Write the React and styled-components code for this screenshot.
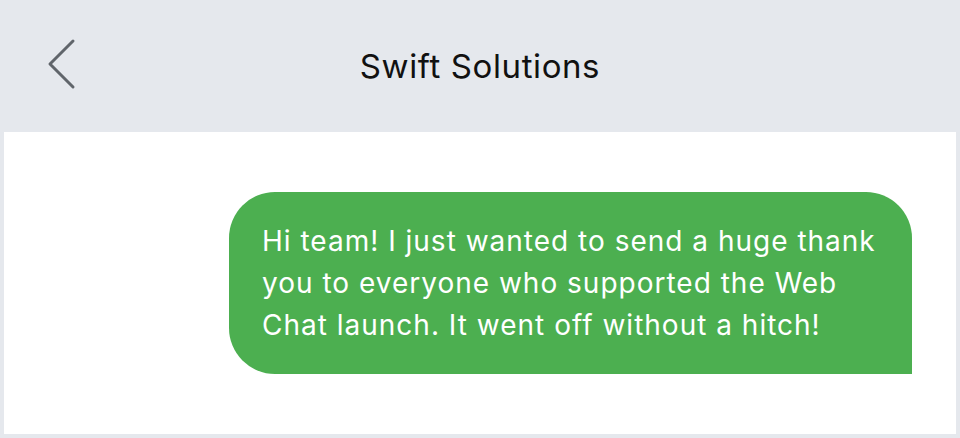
import React from 'react'
import styled, { createGlobalStyle } from 'styled-components'

const GlobalStyle = createGlobalStyle`
  html, body {
    margin: 0;
    padding: 0;
    background: #e5e8ed;
    font-family: Inter, "Noto Sans", sans-serif;
  }
`

function BackIcon() {
  return (
    <svg width="30" height="52" viewBox="0 0 30 52" fill="none">
      <path
        d="M26 3 L3 26 L26 49"
        stroke="#60656b"
        strokeWidth="3"
        strokeLinecap="round"
        strokeLinejoin="round"
      />
    </svg>
  )
}

export default function App() {
  return (
    <Page>
      <GlobalStyle />
      <Header>
        <BackButton aria-label="Back">
          <BackIcon />
        </BackButton>
        <Title>Swift Solutions</Title>
      </Header>
      <Thread>
        <Bubble>
          Hi team! I just wanted to send a huge thank you to everyone who supported the Web
          Chat launch. It went off without a hitch!
        </Bubble>
      </Thread>
    </Page>
  )
}

const Page = styled.div`
  width: 960px;
  height: 438px;
  padding: 0 4px 4px;
  box-sizing: border-box;
  display: flex;
  flex-direction: column;
  background: #e5e8ed;
`

const Header = styled.div`
  height: 132px;
  position: relative;
  display: flex;
  align-items: center;
  justify-content: center;
`

const BackButton = styled.button`
  position: absolute;
  left: 43px;
  top: 38px;
  background: none;
  border: none;
  padding: 0;
  cursor: pointer;
  display: flex;
`

const Title = styled.h1`
  margin: 0;
  font-size: 33px;
  font-weight: 400;
  color: #111;
  letter-spacing: 0.6px;
`

const Thread = styled.div`
  flex: 1;
  background: #fff;
  display: flex;
  flex-direction: column;
  align-items: flex-end;
  padding: 60px 44px 60px 0;
`

const Bubble = styled.div`
  box-sizing: border-box;
  width: 683px;
  padding: 28px 26px 28px 33px;
  background: #4caf50;
  color: #fff;
  font-size: 28px;
  line-height: 42px;
  letter-spacing: 1px;
  border-radius: 46px 46px 0 46px;
`
